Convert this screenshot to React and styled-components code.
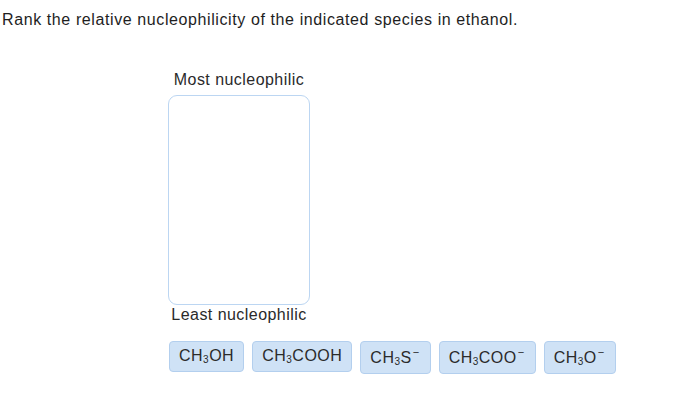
import React from 'react';
import styled, { createGlobalStyle } from 'styled-components';

const GlobalStyle = createGlobalStyle`
  body {
    margin: 0;
    background: #ffffff;
    font-family: "Liberation Sans", Arial, sans-serif;
    color: #222;
  }
`;

const Page = styled.div`
  padding: 11px 2px 0;
`;

const Prompt = styled.div`
  font-size: 16px;
  line-height: 18px;
  letter-spacing: 0.6px;
  color: #1e1e1e;
`;

const Ranker = styled.div`
  margin: 42px 0 0 166px;
  width: 142px;
  display: flex;
  flex-direction: column;
  align-items: center;
`;

const BoxLabel = styled.div`
  font-size: 16px;
  line-height: 18px;
  letter-spacing: 0.45px;
  color: #2a2a2a;
  margin: ${p => (p.$bottom ? '1px 0 0' : '0 0 6px')};
`;

const DropBox = styled.div`
  width: 142px;
  height: 210px;
  box-sizing: border-box;
  border: 1.5px solid #bcd6f2;
  border-radius: 9px;
  background: #fff;
`;

const Tray = styled.div`
  display: flex;
  align-items: flex-start;
  gap: 8px;
  margin: 17px 0 0 167px;
`;

const Tile = styled.div`
  box-sizing: border-box;
  padding: 5px 9px 6px;
  background: #cfe2f6;
  border: 1px solid #b3cfee;
  border-radius: 4px;
  font-size: 16px;
  line-height: 18px;
  letter-spacing: 0.5px;
  color: #2b2b2b;
  white-space: nowrap;
`;

const Sub = styled.sub`
  font-size: 10px;
  vertical-align: -2px;
  line-height: 0;
`;

const Charge = styled.sup`
  font-size: 11px;
  vertical-align: 7px;
  line-height: 1;
  margin: 0 1px 0 1px;
`;

const species = [
  { pre: 'CH', rest: 'OH' },
  { pre: 'CH', rest: 'COOH' },
  { pre: 'CH', rest: 'S', charge: true },
  { pre: 'CH', rest: 'COO', charge: true },
  { pre: 'CH', rest: 'O', charge: true },
];

export default function App() {
  return (
    <Page>
      <GlobalStyle />
      <Prompt>Rank the relative nucleophilicity of the indicated species in ethanol.</Prompt>
      <Ranker>
        <BoxLabel>Most nucleophilic</BoxLabel>
        <DropBox />
        <BoxLabel $bottom>Least nucleophilic</BoxLabel>
      </Ranker>
      <Tray>
        {species.map((s, i) => (
          <Tile key={i}>
            {s.pre}
            <Sub>3</Sub>
            {s.rest}
            {s.charge && <Charge>−</Charge>}
          </Tile>
        ))}
      </Tray>
    </Page>
  );
}
